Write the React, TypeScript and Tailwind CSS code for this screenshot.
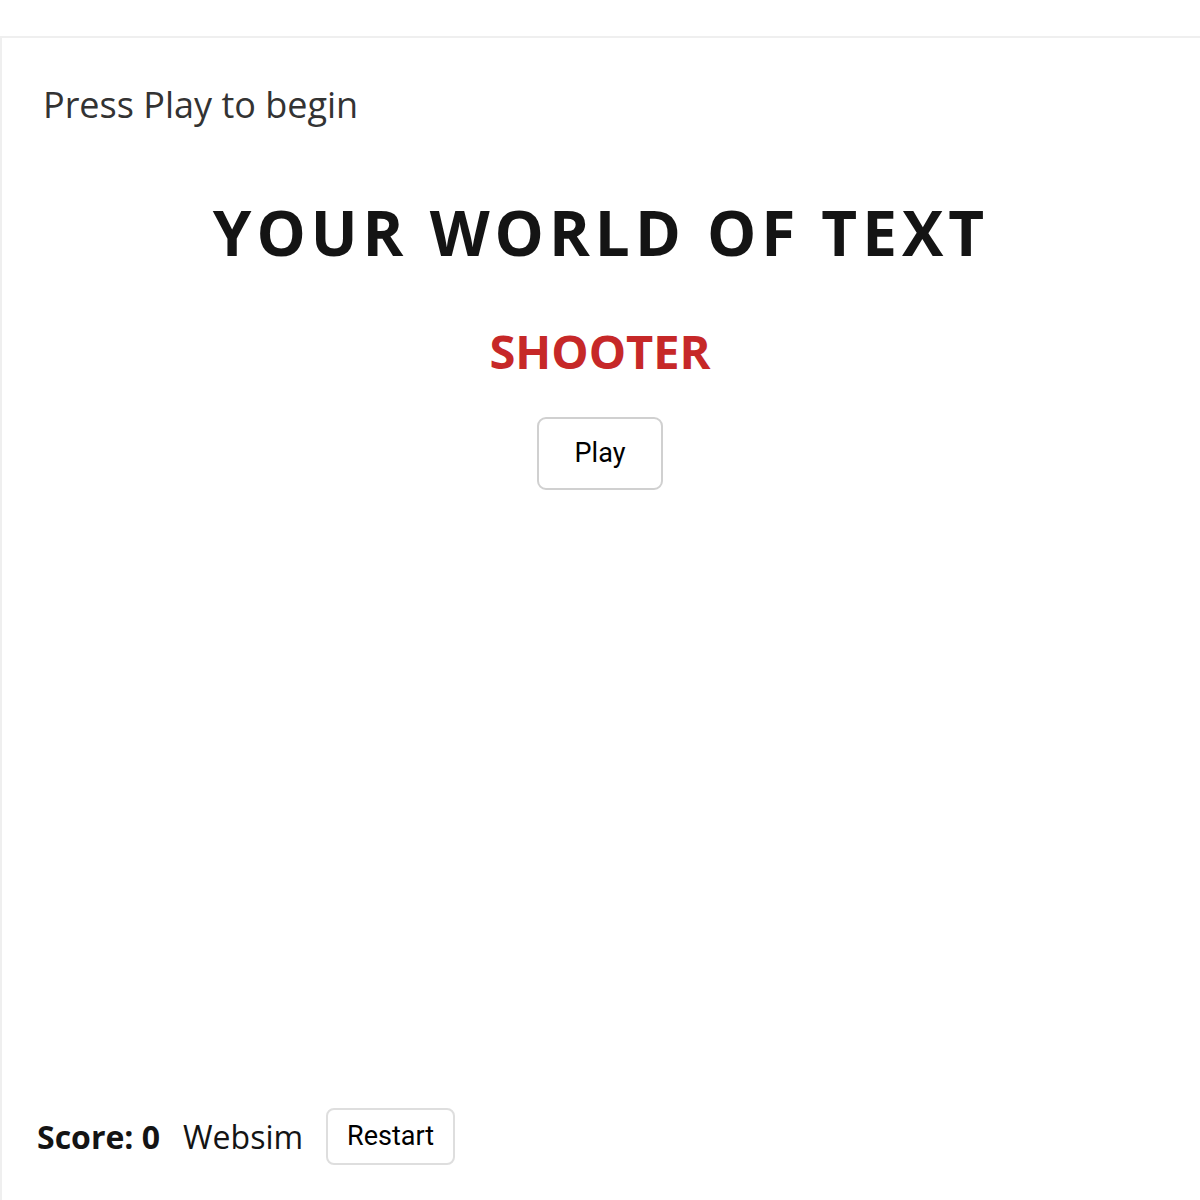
import React from "react";

export default function App() {
  return (
    <div className="w-[1200px] h-[1200px] bg-white overflow-hidden" style={{ fontFamily: '"Open Sans", sans-serif' }}>
      <div className="h-[36px]" />
      <div className="relative h-[1164px] border-t-2 border-l-2 border-[#efefef] flex flex-col">
        <div className="pl-[41px] pt-[43px] text-[36px] leading-[48px] text-[#333]">Press Play to begin</div>
        <div className="flex flex-col items-center pr-[2px]">
          <h1 className="mt-[63px] text-[62px] leading-[80px] font-bold tracking-[5px] text-[#141414] pl-[2px]">YOUR WORLD OF TEXT</h1>
          <h2 className="mt-[49px] text-[47px] leading-[60px] font-bold text-[#c62828]">SHOOTER</h2>
          <button
            className="mt-[36px] w-[126px] h-[73px] border-2 border-[#d0d0d0] rounded-[9px] bg-white text-[27px] text-black"
            style={{ fontFamily: 'Roboto, sans-serif' }}
          >
            Play
          </button>
        </div>
        <div className="mt-auto mb-[35px] pl-[35px] flex items-center">
          <span className="text-[32px] font-bold text-[#141414]">Score: 0</span>
          <span className="ml-[23px] text-[32px] text-[#141414]">Websim</span>
          <button
            className="ml-[23px] w-[129px] h-[57px] border-2 border-[#dedede] rounded-[8px] bg-white text-[27px] text-black"
            style={{ fontFamily: 'Roboto, sans-serif' }}
          >
            Restart
          </button>
        </div>
      </div>
    </div>
  );
}
